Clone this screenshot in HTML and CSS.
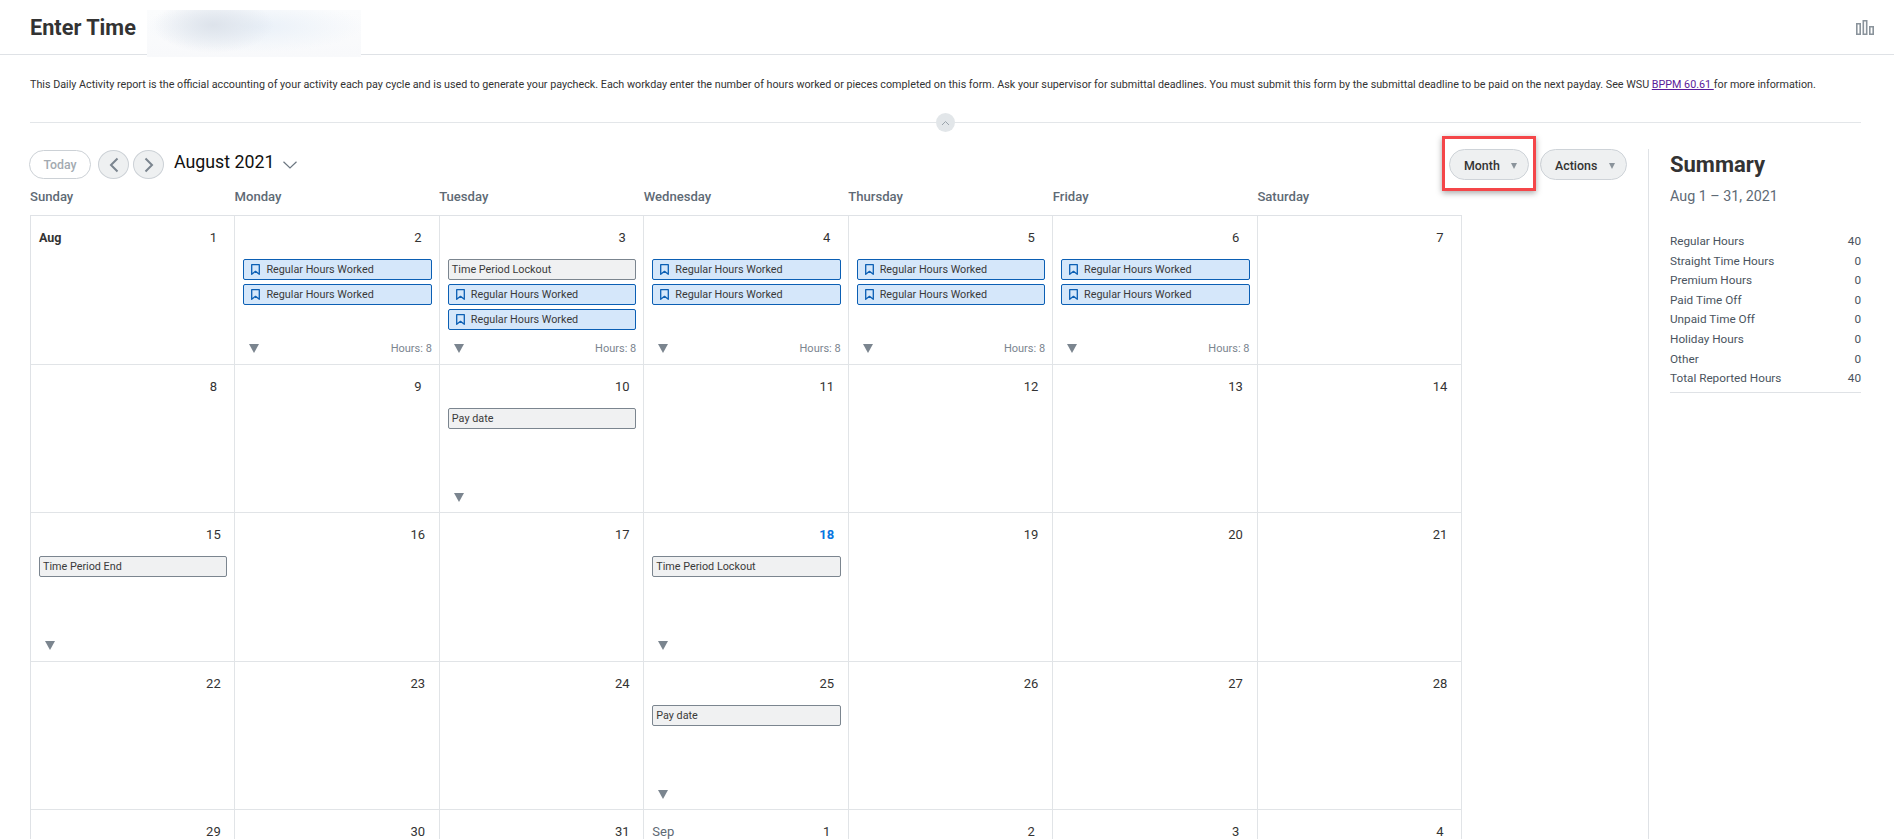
FILE: index.html
```html
<!DOCTYPE html>
<html lang="en">
<head>
    <title>Enter Time</title>
    <link rel="stylesheet" href="styles.css">
</head>
<body>
    <svg class="defs" width="0" height="0">
        <symbol id="bookmark" viewBox="0 0 9 11">
            <path d="M.7.7h7.600v9.600L4.500 7.300.7 10.300z" fill="none" stroke="currentColor" stroke-width="1.300" stroke-linejoin="round"/>
        </symbol>
    </svg>

    <header class="page-header">
        <h1>Enter Time</h1>
        <div class="blurred-name"></div>
        <svg class="chart-icon" width="18" height="15" viewBox="0 0 18 15">
            <path d="M.8 3.800h3.400v10.400H.8zM7.300.8h3.400v13.400H7.300zM13.800 6.800h3.400v7.400h-3.400z" fill="none" stroke="#8a939b" stroke-width="1.600"/>
        </svg>
    </header>

    <p class="intro">This Daily Activity report is the official accounting of your activity each pay cycle and is used to generate your paycheck. Each workday enter the number of hours worked or pieces completed on this form. Ask your supervisor for submittal deadlines. You must submit this form by the submittal deadline to be paid on the next payday. See WSU <a href="#">BPPM 60.61 </a>for more information.</p>

    <div class="divider">
        <button class="collapse">
            <svg width="9" height="6" viewBox="0 0 9 6"><path d="M1 5l3.500-3.500L8 5" fill="none" stroke="#9aa3ab" stroke-width="1"/></svg>
        </button>
    </div>

    <div class="main">
        <section class="calendar">
            <div class="toolbar">
                <button class="today">Today</button>
                <button class="round-btn">
                    <svg width="10" height="16" viewBox="0 0 10 16"><path d="M8.500 1.500L2 8l6.500 6.500" fill="none" stroke="#7b858f" stroke-width="2"/></svg>
                </button>
                <button class="round-btn">
                    <svg width="10" height="16" viewBox="0 0 10 16"><path d="M1.500 1.500L8 8l-6.500 6.500" fill="none" stroke="#7b858f" stroke-width="2"/></svg>
                </button>
                <span class="month-title">August 2021</span>
                <svg class="title-chevron" width="14" height="8" viewBox="0 0 14 8"><path d="M.5.7L7 7 13.500.7" fill="none" stroke="#6b7680" stroke-width="1.200"/></svg>
                <div class="toolbar-right">
                    <button class="pill pill-month">Month<span class="caret"></span></button>
                    <button class="pill pill-actions">Actions<span class="caret"></span></button>
                </div>
                <div class="callout"></div>
            </div>

            <div class="weekdays">
                <div>Sunday</div>
                <div>Monday</div>
                <div>Tuesday</div>
                <div>Wednesday</div>
                <div>Thursday</div>
                <div>Friday</div>
                <div>Saturday</div>
            </div>

            <div class="month-grid">
                <div class="day"><div class="day-head"><b>Aug</b><span>1</span></div></div>
                <div class="day">
                    <div class="day-head"><span>2</span></div>
                    <div class="event work"><svg width="9" height="11"><use href="#bookmark"/></svg>Regular Hours Worked</div>
                    <div class="event work"><svg width="9" height="11"><use href="#bookmark"/></svg>Regular Hours Worked</div>
                    <div class="day-foot"><span class="caret-big"></span><span class="hours">Hours: 8</span></div>
                </div>
                <div class="day">
                    <div class="day-head"><span>3</span></div>
                    <div class="event note">Time Period Lockout</div>
                    <div class="event work"><svg width="9" height="11"><use href="#bookmark"/></svg>Regular Hours Worked</div>
                    <div class="event work"><svg width="9" height="11"><use href="#bookmark"/></svg>Regular Hours Worked</div>
                    <div class="day-foot"><span class="caret-big"></span><span class="hours">Hours: 8</span></div>
                </div>
                <div class="day">
                    <div class="day-head"><span>4</span></div>
                    <div class="event work"><svg width="9" height="11"><use href="#bookmark"/></svg>Regular Hours Worked</div>
                    <div class="event work"><svg width="9" height="11"><use href="#bookmark"/></svg>Regular Hours Worked</div>
                    <div class="day-foot"><span class="caret-big"></span><span class="hours">Hours: 8</span></div>
                </div>
                <div class="day">
                    <div class="day-head"><span>5</span></div>
                    <div class="event work"><svg width="9" height="11"><use href="#bookmark"/></svg>Regular Hours Worked</div>
                    <div class="event work"><svg width="9" height="11"><use href="#bookmark"/></svg>Regular Hours Worked</div>
                    <div class="day-foot"><span class="caret-big"></span><span class="hours">Hours: 8</span></div>
                </div>
                <div class="day">
                    <div class="day-head"><span>6</span></div>
                    <div class="event work"><svg width="9" height="11"><use href="#bookmark"/></svg>Regular Hours Worked</div>
                    <div class="event work"><svg width="9" height="11"><use href="#bookmark"/></svg>Regular Hours Worked</div>
                    <div class="day-foot"><span class="caret-big"></span><span class="hours">Hours: 8</span></div>
                </div>
                <div class="day"><div class="day-head"><span>7</span></div></div>

                <div class="day"><div class="day-head"><span>8</span></div></div>
                <div class="day"><div class="day-head"><span>9</span></div></div>
                <div class="day">
                    <div class="day-head"><span>10</span></div>
                    <div class="event note">Pay date</div>
                    <div class="day-foot"><span class="caret-big"></span></div>
                </div>
                <div class="day"><div class="day-head"><span>11</span></div></div>
                <div class="day"><div class="day-head"><span>12</span></div></div>
                <div class="day"><div class="day-head"><span>13</span></div></div>
                <div class="day"><div class="day-head"><span>14</span></div></div>

                <div class="day">
                    <div class="day-head"><span>15</span></div>
                    <div class="event note">Time Period End</div>
                    <div class="day-foot"><span class="caret-big"></span></div>
                </div>
                <div class="day"><div class="day-head"><span>16</span></div></div>
                <div class="day"><div class="day-head"><span>17</span></div></div>
                <div class="day">
                    <div class="day-head"><span class="current">18</span></div>
                    <div class="event note">Time Period Lockout</div>
                    <div class="day-foot"><span class="caret-big"></span></div>
                </div>
                <div class="day"><div class="day-head"><span>19</span></div></div>
                <div class="day"><div class="day-head"><span>20</span></div></div>
                <div class="day"><div class="day-head"><span>21</span></div></div>

                <div class="day"><div class="day-head"><span>22</span></div></div>
                <div class="day"><div class="day-head"><span>23</span></div></div>
                <div class="day"><div class="day-head"><span>24</span></div></div>
                <div class="day">
                    <div class="day-head"><span>25</span></div>
                    <div class="event note">Pay date</div>
                    <div class="day-foot"><span class="caret-big"></span></div>
                </div>
                <div class="day"><div class="day-head"><span>26</span></div></div>
                <div class="day"><div class="day-head"><span>27</span></div></div>
                <div class="day"><div class="day-head"><span>28</span></div></div>

                <div class="day"><div class="day-head"><span>29</span></div></div>
                <div class="day"><div class="day-head"><span>30</span></div></div>
                <div class="day"><div class="day-head"><span>31</span></div></div>
                <div class="day"><div class="day-head"><em>Sep</em><span>1</span></div></div>
                <div class="day"><div class="day-head"><span>2</span></div></div>
                <div class="day"><div class="day-head"><span>3</span></div></div>
                <div class="day"><div class="day-head"><span>4</span></div></div>
            </div>
        </section>

        <aside class="summary">
            <h2>Summary</h2>
            <div class="summary-range">Aug 1 – 31, 2021</div>
            <ul class="summary-list">
                <li><span>Regular Hours</span><span>40</span></li>
                <li><span>Straight Time Hours</span><span>0</span></li>
                <li><span>Premium Hours</span><span>0</span></li>
                <li><span>Paid Time Off</span><span>0</span></li>
                <li><span>Unpaid Time Off</span><span>0</span></li>
                <li><span>Holiday Hours</span><span>0</span></li>
                <li><span>Other</span><span>0</span></li>
                <li><span>Total Reported Hours</span><span>40</span></li>
            </ul>
        </aside>
    </div>
</body>
</html>
```

FILE: styles.css
```css
html {
    overflow: hidden;
}
body {
    margin: 0;
    height: 839px;
    overflow: hidden;
    background: #fff;
    color: #333;
    font-family: 'Roboto', 'Liberation Sans', sans-serif;
}
button {
    font-family: inherit;
    cursor: pointer;
}
.defs {
    display: block;
    height: 0;
}

.page-header {
    display: flex;
    align-items: center;
    height: 54px;
    padding: 0 20px 0 30px;
    border-bottom: 1px solid #dfe2e6;
}
.page-header h1 {
    margin: 0;
    font-size: 21.7px;
    font-weight: 700;
    color: #333;
}
.blurred-name {
    align-self: flex-start;
    width: 214px;
    height: 47px;
    margin: 10px 0 0 11px;
    position: relative;
    background:
        radial-gradient(ellipse 60px 28px at 31% 32%, #dde3eb, rgba(221, 227, 235, 0)),
        radial-gradient(ellipse 110px 26px at 50% 35%, #e9f0f8, rgba(233, 240, 248, 0)),
        linear-gradient(#fbfcfd, #f8f9fb);
}
.chart-icon {
    margin-left: auto;
}

.intro {
    margin: 0;
    padding: 23px 30px 0;
    height: 44px;
    font-size: 10.75px;
    line-height: 14px;
    color: #333;
    white-space: nowrap;
}
.intro a {
    color: #5a1a9a;
}

.divider {
    position: relative;
    height: 1px;
    margin: 0 33px 0 30px;
    background: #e3e6e9;
}
.collapse {
    position: absolute;
    left: 906px;
    top: -9px;
    width: 19px;
    height: 19px;
    padding: 0;
    border: none;
    border-radius: 50%;
    background: #e2e6e9;
    display: flex;
    align-items: center;
    justify-content: center;
}

.main {
    display: flex;
    padding: 26px 33px 0 30px;
}
.calendar {
    width: 1618px;
    flex: none;
}

.toolbar {
    display: flex;
    align-items: center;
    position: relative;
    height: 31px;
    padding-right: 21px;
}
.today {
    width: 62px;
    height: 29px;
    margin-left: -1px;
    padding: 0;
    border: 1px solid #ccd1d6;
    border-radius: 15px;
    background: #fff;
    color: #a3aab1;
    font-size: 12.3px;
    font-weight: 500;
}
.round-btn {
    width: 31px;
    height: 29px;
    margin-left: 7px;
    padding: 0;
    border: 1px solid #ccd1d6;
    border-radius: 50%;
    background: #eef0f1;
    display: flex;
    align-items: center;
    justify-content: center;
}
.round-btn + .round-btn {
    margin-left: 4px;
}
.month-title {
    margin: 0 0 6px 10px;
    font-size: 17.8px;
    color: #111;
}
.title-chevron {
    margin-left: 9px;
}
.toolbar-right {
    display: flex;
    gap: 11px;
    margin-left: auto;
}
.pill {
    display: flex;
    align-items: center;
    justify-content: space-between;
    height: 31px;
    padding: 2px 11px 0 14px;
    border: 1px solid #ced3d8;
    border-radius: 16px;
    background: #eef0f1;
    color: #333;
    font-size: 12.4px;
    font-weight: 500;
}
.pill-month {
    width: 80px;
}
.pill-actions {
    width: 87px;
}
.caret {
    width: 0;
    height: 0;
    margin-top: 1px;
    border-left: 3.5px solid transparent;
    border-right: 3.5px solid transparent;
    border-top: 6px solid #8a939b;
}
/* red annotation box around the Month button */
.callout {
    position: absolute;
    left: 1412px;
    top: -13px;
    width: 88px;
    height: 49px;
    border: 3px solid #f44649;
    box-shadow: 0 2px 6px rgba(0, 0, 0, 0.35);
}

.weekdays {
    display: grid;
    grid-template-columns: repeat(7, 204.57px);
    height: 33px;
    margin-bottom: 2px;
    align-items: center;
    font-size: 13.1px;
    font-weight: 500;
    color: #5e6a75;
}

.month-grid {
    display: grid;
    grid-template-columns: repeat(7, 204.43px);
    grid-auto-rows: 148.5px;
    width: 1431px;
    border-left: 1px solid #dfe2e6;
    border-top: 1px solid #dfe2e6;
}
.day {
    display: flex;
    flex-direction: column;
    box-sizing: border-box;
    padding: 0 7px 6px 8px;
    border-right: 1px solid #e1e4e7;
    border-bottom: 1px solid #e1e4e7;
}
.day-head {
    display: flex;
    justify-content: space-between;
    flex: none;
    height: 43px;
    box-sizing: border-box;
    padding: 12px 2px 0 0;
    font-size: 13px;
    line-height: 20px;
    color: #333;
}
.day-head span {
    width: 24px;
    margin-left: auto;
    text-align: center;
}
.day-head b {
    font-weight: 700;
    font-size: 12.5px;
}
.day-head em {
    font-style: normal;
    color: #5e6a75;
}
.day-head .current {
    color: #0875e1;
    font-weight: 700;
}

.event {
    display: flex;
    align-items: center;
    flex: none;
    box-sizing: border-box;
    height: 21px;
    margin-bottom: 4px;
    padding: 0 3px;
    border-radius: 2px;
    font-size: 10.8px;
    color: #3a3a3a;
    white-space: nowrap;
}
.event.work {
    padding-left: 7px;
    border: 1px solid #0b5fb4;
    background: #d5e7fa;
}
.event.work svg {
    flex: none;
    margin-right: 6px;
    color: #0b5fb4;
}
.event.note {
    border: 1px solid #7b858f;
    background: #f0f1f2;
}

.day-foot {
    display: flex;
    align-items: center;
    justify-content: space-between;
    margin-top: auto;
    height: 18px;
}
.caret-big {
    width: 0;
    height: 0;
    margin-left: 6px;
    border-left: 5.5px solid transparent;
    border-right: 5.5px solid transparent;
    border-top: 9px solid #7b858f;
}
.hours {
    font-size: 11px;
    color: #7b858f;
}

.summary {
    flex: 1;
    padding-left: 21px;
    border-left: 1px solid #dfe2e6;
    height: 700px;
}
.summary h2 {
    margin: 2px 0 0;
    font-size: 22px;
    line-height: 28px;
    font-weight: 700;
    color: #333;
}
.summary-range {
    margin-top: 7px;
    font-size: 14.3px;
    line-height: 20px;
    color: #5e6a75;
}
.summary-list {
    list-style: none;
    margin: 26px 0 0;
    padding: 0 0 3px;
    border-bottom: 1px solid #dfe2e6;
    font-size: 11.75px;
    color: #4a545e;
}
.summary-list li {
    display: flex;
    justify-content: space-between;
    height: 19.6px;
    line-height: 19.6px;
}
```
